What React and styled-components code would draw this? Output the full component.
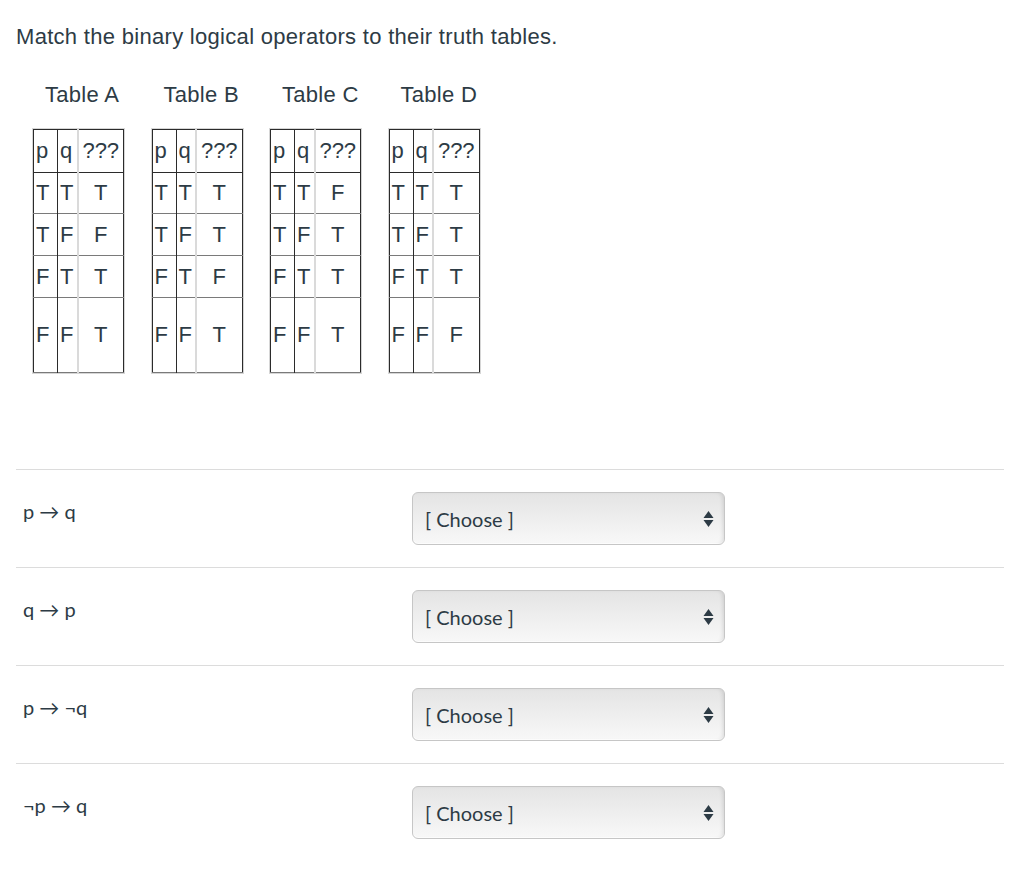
import React from 'react';
import styled, { createGlobalStyle } from 'styled-components';

const GlobalStyle = createGlobalStyle`
  body {
    margin: 0;
    background: #fff;
    color: #2d3b45;
    font-family: 'Liberation Sans', Arial, sans-serif;
  }
`;

const Page = styled.div`
  padding: 0 20px 0 16px;
`;

const Title = styled.p`
  margin: 0;
  padding-top: 22px;
  font-size: 22px;
  letter-spacing: 0.3px;
  line-height: 30px;
`;

const TablesGrid = styled.div`
  display: grid;
  grid-template-columns: repeat(4, 90px);
  column-gap: 28.5px;
  padding-left: 17px;
  margin-top: 31px;
`;

const TableLabel = styled.div`
  padding-left: 12px;
  font-size: 22px;
  letter-spacing: 0.3px;
  line-height: 24px;
  white-space: nowrap;
`;

const TruthTable = styled.table`
  margin-top: 22px;
  width: 90px;
  border-collapse: collapse;
  border: 1px solid #2b2b2b;
  box-shadow: 0 0 0 1px #d6d6d6;
  font-size: 22px;
  table-layout: fixed;
`;

const Row = styled.tr`
  height: ${(p) => p.$h}px;
  border-bottom: 1px solid ${(p) => (p.$head ? '#2b2b2b' : '#7a7a7a')};
`;

const Cell = styled.td`
  box-sizing: border-box;
  padding: 0 0 0 ${(p) => (p.$center ? 0 : 2)}px;
  width: ${(p) => p.$w}px;
  text-align: ${(p) => (p.$center ? 'center' : 'left')};
  border-right: ${(p) => p.$divider || 'none'};
  vertical-align: middle;
  line-height: 1;
  white-space: nowrap;
  overflow: visible;
`;

const Answers = styled.div`
  margin-top: 96px;
  width: 988px;
`;

const AnswerRow = styled.div`
  display: flex;
  align-items: center;
  height: 97px;
  border-top: 1px solid #dcdcdc;
`;

const Operator = styled.div`
  width: 389px;
  padding-left: 7px;
  margin-top: -16px;
  font-family: Lato, 'Open Sans', sans-serif;
  font-size: 20px;
`;

const Dropdown = styled.div`
  box-sizing: border-box;
  width: 313px;
  height: 53px;
  display: flex;
  align-items: center;
  justify-content: space-between;
  padding: 0 10px 0 12px;
  border: 1px solid #c6c6c6;
  border-radius: 6px;
  background: linear-gradient(#e4e4e4, #f8f8f8);
  box-shadow: inset -3px 0 4px -2px rgba(0, 0, 0, 0.12), inset 0 -1px 0 #fff;
  font-family: Lato, 'Open Sans', sans-serif;
  font-size: 20px;
  color: #2d3b45;
`;

const tables = [
  { name: 'Table A', out: ['T', 'F', 'T', 'T'] },
  { name: 'Table B', out: ['T', 'T', 'F', 'T'] },
  { name: 'Table C', out: ['F', 'T', 'T', 'T'] },
  { name: 'Table D', out: ['T', 'T', 'T', 'F'] },
];

const inputs = [
  ['T', 'T'],
  ['T', 'F'],
  ['F', 'T'],
  ['F', 'F'],
];

const heights = [41, 42, 42, 75];

const operators = ['p → q', 'q → p', 'p → ¬q', '¬p → q'];

function Arrows() {
  return (
    <svg width="11" height="18" viewBox="0 0 11 18">
      <polygon points="5.5,1 10.5,8 0.5,8" fill="#2d3b45" />
      <polygon points="0.5,10 10.5,10 5.5,17" fill="#2d3b45" />
    </svg>
  );
}

function Truth({ out }) {
  return (
    <TruthTable>
      <tbody>
        <Row $h={43} $head>
          <Cell $w={24} $divider="1px solid #2b2b2b">p</Cell>
          <Cell $w={20} $divider="2px solid #dadada">q</Cell>
          <Cell $w={46} $center>???</Cell>
        </Row>
        {inputs.map((r, i) => (
          <Row key={i} $h={heights[i]}>
            <Cell $w={24} $divider="1px solid #2b2b2b">{r[0]}</Cell>
            <Cell $w={20} $divider="2px solid #dadada">{r[1]}</Cell>
            <Cell $w={46} $center>{out[i]}</Cell>
          </Row>
        ))}
      </tbody>
    </TruthTable>
  );
}

export default function App() {
  return (
    <Page>
      <GlobalStyle />
      <Title>Match the binary logical operators to their truth tables.</Title>
      <TablesGrid>
        {tables.map((t) => (
          <TableLabel key={t.name}>{t.name}</TableLabel>
        ))}
        {tables.map((t) => (
          <Truth key={t.name} out={t.out} />
        ))}
      </TablesGrid>
      <Answers>
        {operators.map((op) => (
          <AnswerRow key={op}>
            <Operator>{op}</Operator>
            <Dropdown>
              <span>[ Choose ]</span>
              <Arrows />
            </Dropdown>
          </AnswerRow>
        ))}
      </Answers>
    </Page>
  );
}
